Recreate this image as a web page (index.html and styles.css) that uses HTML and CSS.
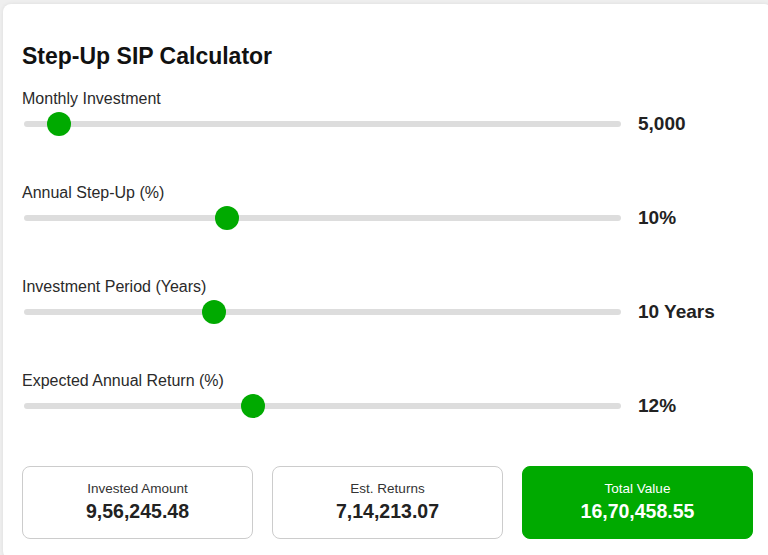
FILE: index.html
```html
<!DOCTYPE html>
<html lang="en">

<head>
    <meta charset="UTF-8">
    <meta name="viewport" content="width=device-width, initial-scale=1.0">
    <title>Step-Up SIP Calculator</title>
    <link rel="stylesheet" href="styles.css">
</head>

<body>
    <div class="calculator">
        <h2>Step-Up SIP Calculator</h2>

        <div class="field">
            <label for="monthly">Monthly Investment</label>
            <div class="slider-row">
                <input type="range" id="monthly" min="1000" max="100000" step="500" value="5000">
                <span class="slider-value">5,000</span>
            </div>
        </div>

        <div class="field">
            <label for="stepup">Annual Step-Up (%)</label>
            <div class="slider-row">
                <input type="range" id="stepup" min="0" max="30" value="10">
                <span class="slider-value">10%</span>
            </div>
        </div>

        <div class="field">
            <label for="period">Investment Period (Years)</label>
            <div class="slider-row">
                <input type="range" id="period" min="1" max="30" value="10">
                <span class="slider-value">10 Years</span>
            </div>
        </div>

        <div class="field">
            <label for="rate">Expected Annual Return (%)</label>
            <div class="slider-row">
                <input type="range" id="rate" min="1" max="30" value="12">
                <span class="slider-value">12%</span>
            </div>
        </div>

        <div class="results">
            <div class="result-box">
                <p class="result-label">Invested Amount</p>
                <p class="result-value">9,56,245.48</p>
            </div>
            <div class="result-box">
                <p class="result-label">Est. Returns</p>
                <p class="result-value">7,14,213.07</p>
            </div>
            <div class="result-box total">
                <p class="result-label">Total Value</p>
                <p class="result-value">16,70,458.55</p>
            </div>
        </div>
    </div>
</body>

</html>
```

FILE: styles.css
```css
body {
    font-family: "Liberation Sans", Arial, sans-serif;
    background-color: #efefef;
    margin: 0;
    padding: 4px 0 0 3px;
    overflow: hidden;
}

.calculator {
    background-color: #fff;
    width: 731px;
    padding: 20px 19px 20px;
    border-radius: 8px;
    box-shadow: 0 0 4px rgba(0, 0, 0, 0.08);
}

h2 {
    font-size: 23px;
    color: #111;
    margin: 19px 0 20px;
}

.field {
    margin-bottom: 48px;
}

.field:last-of-type {
    margin-bottom: 49px;
}

.field label {
    display: block;
    font-size: 16px;
    color: #2a2a2a;
    margin-bottom: 4px;
}

.slider-row {
    display: flex;
    align-items: center;
    gap: 15px;
}

.slider-row input[type="range"] {
    -webkit-appearance: none;
    appearance: none;
    flex: 1;
    height: 24px;
    margin: 0 2px;
    background: transparent;
}

.slider-row input[type="range"]::-webkit-slider-runnable-track {
    height: 6px;
    background: #ddd;
    border-radius: 3px;
}

.slider-row input[type="range"]::-webkit-slider-thumb {
    -webkit-appearance: none;
    width: 24px;
    height: 24px;
    margin-top: -9px;
    border-radius: 50%;
    background: #00aa00;
    border: none;
}

.slider-value {
    width: 115px;
    font-size: 19px;
    font-weight: bold;
    color: #222;
}

.results {
    display: grid;
    grid-template-columns: repeat(3, 1fr);
    gap: 19px;
}

.result-box {
    border: 1px solid #ccc;
    border-radius: 8px;
    padding: 14px 10px 15px;
    text-align: center;
}

.result-label {
    margin: 0 0 4px;
    font-size: 13.5px;
    color: #333;
}

.result-value {
    margin: 0;
    font-size: 19.5px;
    font-weight: bold;
    color: #222;
}

.total {
    background-color: #00aa00;
    border-color: #00aa00;
}

.total .result-label,
.total .result-value {
    color: #fff;
}
```
